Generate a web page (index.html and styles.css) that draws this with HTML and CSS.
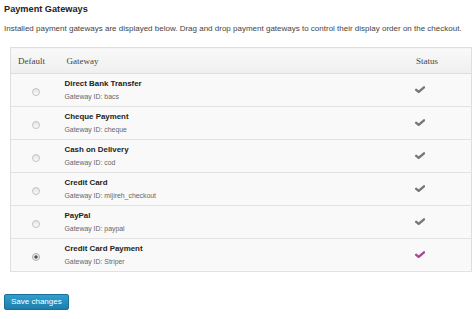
FILE: index.html
```html
<!DOCTYPE html>
<html>
<head>
<meta charset="utf-8">
<link rel="stylesheet" href="styles.css">
</head>
<body>
<h3 class="title">Payment Gateways</h3>
<p class="desc">Installed payment gateways are displayed below. Drag and drop payment gateways to control their display order on the checkout.</p>
<table class="gateways">
  <thead>
    <tr>
      <th class="col-default">Default</th>
      <th class="col-gateway">Gateway</th>
      <th class="col-status">Status</th>
    </tr>
  </thead>
  <tbody>
    <tr>
      <td class="cell-radio"><span class="radio"></span></td>
      <td class="cell-name"><div class="name">Direct Bank Transfer</div><div class="gid">Gateway ID: bacs</div></td>
      <td class="cell-status"><svg class="check" viewBox="0 0 10 7" width="10" height="7"><path d="M1.2 3.8 L3.7 5.9 L9 1.3" fill="none" stroke="#777" stroke-width="2.4" stroke-linejoin="round" stroke-linecap="round"/></svg></td>
    </tr>
    <tr>
      <td class="cell-radio"><span class="radio"></span></td>
      <td class="cell-name"><div class="name">Cheque Payment</div><div class="gid">Gateway ID: cheque</div></td>
      <td class="cell-status"><svg class="check" viewBox="0 0 10 7" width="10" height="7"><path d="M1.2 3.8 L3.7 5.9 L9 1.3" fill="none" stroke="#777" stroke-width="2.4" stroke-linejoin="round" stroke-linecap="round"/></svg></td>
    </tr>
    <tr>
      <td class="cell-radio"><span class="radio"></span></td>
      <td class="cell-name"><div class="name">Cash on Delivery</div><div class="gid">Gateway ID: cod</div></td>
      <td class="cell-status"><svg class="check" viewBox="0 0 10 7" width="10" height="7"><path d="M1.2 3.8 L3.7 5.9 L9 1.3" fill="none" stroke="#777" stroke-width="2.4" stroke-linejoin="round" stroke-linecap="round"/></svg></td>
    </tr>
    <tr>
      <td class="cell-radio"><span class="radio"></span></td>
      <td class="cell-name"><div class="name">Credit Card</div><div class="gid">Gateway ID: mijireh_checkout</div></td>
      <td class="cell-status"><svg class="check" viewBox="0 0 10 7" width="10" height="7"><path d="M1.2 3.8 L3.7 5.9 L9 1.3" fill="none" stroke="#777" stroke-width="2.4" stroke-linejoin="round" stroke-linecap="round"/></svg></td>
    </tr>
    <tr>
      <td class="cell-radio"><span class="radio"></span></td>
      <td class="cell-name"><div class="name">PayPal</div><div class="gid">Gateway ID: paypal</div></td>
      <td class="cell-status"><svg class="check" viewBox="0 0 10 7" width="10" height="7"><path d="M1.2 3.8 L3.7 5.9 L9 1.3" fill="none" stroke="#777" stroke-width="2.4" stroke-linejoin="round" stroke-linecap="round"/></svg></td>
    </tr>
    <tr>
      <td class="cell-radio"><span class="radio checked"></span></td>
      <td class="cell-name"><div class="name">Credit Card Payment</div><div class="gid">Gateway ID: Striper</div></td>
      <td class="cell-status"><svg class="check" viewBox="0 0 10 7" width="10" height="7"><path d="M1.2 3.8 L3.7 5.9 L9 1.3" fill="none" stroke="#a54a91" stroke-width="2.4" stroke-linejoin="round" stroke-linecap="round"/></svg></td>
    </tr>
  </tbody>
</table>
<div class="actions"><button class="save">Save changes</button></div>
</body>
</html>
```
FILE: styles.css
```css
html, body {
  margin: 0;
  padding: 0;
  background: #ffffff;
}
body {
  padding: 3px 4px 0 4px;
  font-family: "Liberation Sans", Arial, sans-serif;
  color: #333;
}
.title {
  margin: 0;
  font-size: 9.2px;
  line-height: 12px;
  font-weight: bold;
  color: #222;
}
.desc {
  margin: 9px 0 0 0;
  font-size: 8px;
  line-height: 10px;
  color: #444;
  white-space: nowrap;
}
.gateways {
  margin: 13px 0 0 6px;
  width: 462px;
  border-collapse: collapse;
  border: 1px solid #dedede;
}
.gateways th {
  height: 25px;
  padding: 0;
  font-family: "Liberation Serif", "Times New Roman", serif;
  font-weight: normal;
  font-size: 9px;
  color: #444;
  background: linear-gradient(#f9f9f9, #efefef);
  border-bottom: 1px solid #dedede;
  text-align: left;
  vertical-align: middle;
}
.col-default {
  width: 50px;
  padding-left: 7px !important;
  box-sizing: border-box;
}
.col-gateway {
  padding-left: 6px !important;
}
.col-status {
  width: 88px;
  text-align: center !important;
}
.gateways td {
  height: 25px;
  background: #f9f9f9;
  border-bottom: 1px solid #e2e2e2;
  vertical-align: top;
  padding: 0;
}
.cell-radio {
  text-align: center;
  vertical-align: middle !important;
}
.radio {
  display: inline-block;
  width: 6px;
  height: 6px;
  border: 1px solid #c4c4c4;
  border-radius: 50%;
  background: linear-gradient(#e4e4e4, #fbfbfb);
  vertical-align: middle;
  margin-top: 2px;
}
.radio.checked {
  border-color: #b0b0b0;
  background: radial-gradient(circle, #555 0, #555 1.3px, #e8e8e8 2px, #f6f6f6 100%);
}
.cell-name {
  padding: 4px 0 3px 4px !important;
}
.name {
  font-size: 7.9px;
  line-height: 11px;
  font-weight: bold;
  color: #222;
}
.gid {
  margin-top: 3px;
  font-size: 6.9px;
  line-height: 10px;
  color: #666;
}
.cell-status {
  text-align: center;
  vertical-align: middle !important;
  padding-right: 15px !important;
}
.check {
  display: inline-block;
  vertical-align: middle;
  margin-top: -3px;
}
.actions {
  margin-top: 18px;
}
.save {
  height: 16px;
  padding: 0 6px;
  font-family: "Liberation Sans", Arial, sans-serif;
  font-size: 8px;
  line-height: 14px;
  color: #fff;
  background: linear-gradient(#2e9fd2, #1f7eaa);
  border: 1px solid #1d6f96;
  border-radius: 2px;
}
```
